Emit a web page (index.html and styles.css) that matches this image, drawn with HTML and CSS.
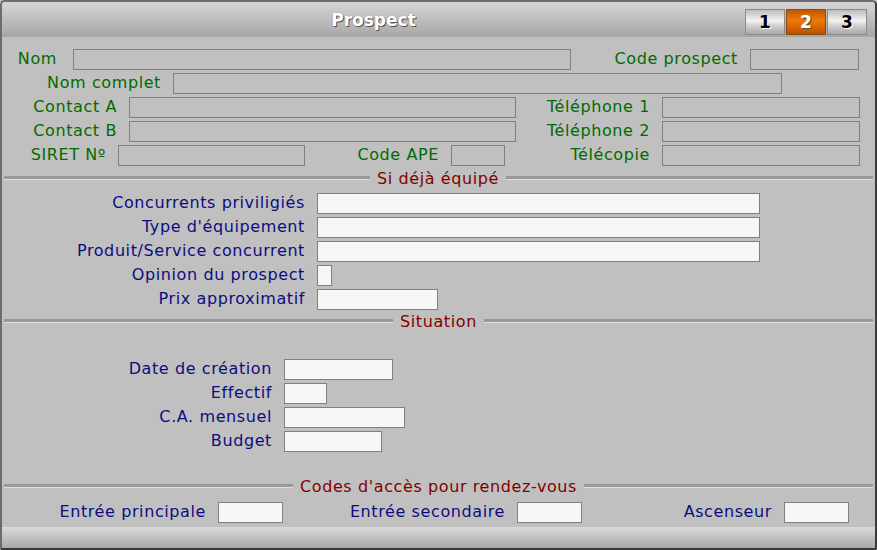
FILE: index.html
```html
<!DOCTYPE html>
<html lang="fr">
<head>
<meta charset="utf-8">
<title>Prospect</title>
<link rel="stylesheet" href="styles.css">
</head>
<body>
<div class="window">
  <div class="titlebar">
    <div class="title">Prospect</div>
    <div class="tabs">
      <div class="tab">1</div>
      <div class="tab active">2</div>
      <div class="tab">3</div>
    </div>
  </div>
  <div class="body">
    <div class="sec sec1">
      <div class="row r1">
        <span class="lbl g wide">Nom</span><span class="fld dis"></span>
        <span class="lbl g">Code prospect</span><span class="fld dis"></span>
      </div>
      <div class="row r2">
        <span class="lbl g">Nom complet</span><span class="fld dis"></span>
      </div>
      <div class="row r3">
        <span class="lbl g">Contact A</span><span class="fld dis"></span>
        <span class="lbl g">Téléphone 1</span><span class="fld dis"></span>
      </div>
      <div class="row r3">
        <span class="lbl g">Contact B</span><span class="fld dis"></span>
        <span class="lbl g">Téléphone 2</span><span class="fld dis"></span>
      </div>
      <div class="row r5">
        <span class="lbl g">SIRET Nº</span><span class="fld dis"></span>
        <span class="lbl g">Code APE</span><span class="fld dis"></span>
        <span class="lbl g">Télécopie</span><span class="fld dis"></span>
      </div>
    </div>
    <div class="divider d1"><span class="line"></span><span class="dtext">Si déjà équipé</span><span class="line"></span></div>
    <div class="sec sec2">
      <div class="row s2"><span class="lbl b">Concurrents priviligiés</span><span class="fld w443"></span></div>
      <div class="row s2"><span class="lbl b">Type d'équipement</span><span class="fld w443"></span></div>
      <div class="row s2"><span class="lbl b">Produit/Service concurrent</span><span class="fld w443"></span></div>
      <div class="row s2"><span class="lbl b">Opinion du prospect</span><span class="fld w15"></span></div>
      <div class="row s2"><span class="lbl b">Prix approximatif</span><span class="fld w121"></span></div>
    </div>
    <div class="divider d2"><span class="line"></span><span class="dtext">Situation</span><span class="line"></span></div>
    <div class="sec sec3">
      <div class="row s3"><span class="lbl b">Date de création</span><span class="fld w109"></span></div>
      <div class="row s3"><span class="lbl b">Effectif</span><span class="fld w43"></span></div>
      <div class="row s3"><span class="lbl b">C.A. mensuel</span><span class="fld w121"></span></div>
      <div class="row s3"><span class="lbl b">Budget</span><span class="fld w98"></span></div>
    </div>
    <div class="divider d3"><span class="line"></span><span class="dtext">Codes d'accès pour rendez-vous</span><span class="line"></span></div>
    <div class="sec sec4">
      <div class="row s4">
        <span class="lbl b">Entrée principale</span><span class="fld"></span>
        <span class="lbl b">Entrée secondaire</span><span class="fld"></span>
        <span class="lbl b">Ascenseur</span><span class="fld"></span>
      </div>
    </div>
  </div>
  <div class="footer"></div>
</div>
</body>
</html>
```
FILE: styles.css
```css
* { box-sizing: border-box; }
html, body { margin: 0; padding: 0; background: #c0c0c0; }
body { font-family: "DejaVu Sans", Verdana, sans-serif; font-size: 16px; }

.window {
  width: 877px;
  height: 550px;
  border: 2px solid #6c6c6c;
  border-right-color: #3a3a3a;
  border-bottom-color: #3a3a3a;
  border-radius: 5px 5px 2px 2px;
  background: #c0c0c0;
  display: flex;
  flex-direction: column;
  overflow: hidden;
}

.titlebar {
  height: 35px;
  flex: none;
  display: flex;
  align-items: flex-start;
  background: linear-gradient(#d6d6d6, #a6a6a6);
}
.title {
  flex: 1;
  text-align: center;
  padding-top: 8px;
  font-weight: bold;
  font-size: 17px;
  color: #ffffff;
  text-shadow: 1px 1px 0 #555, 0 0 1px #777;
}
.tabs {
  display: flex;
  gap: 1px;
  margin-top: 7px;
  margin-right: 8px;
}
.tab {
  width: 40px;
  height: 26px;
  border: 1px solid #8a8a8a;
  background: linear-gradient(#bcbcbc, #f4f4f4 45%, #d8d8d8 60%, #a8a8a8);
  text-align: center;
  line-height: 24px;
  font-weight: bold;
  font-size: 17px;
  color: #000;
  text-shadow: 1px 1px 0 #fff;
}
.tab.active {
  background: linear-gradient(#c05800, #ef7a0c 45%, #e26c00 60%, #b85200);
  border-color: #8a4a10;
  color: #fff;
  text-shadow: 1px 1px 0 #553;
}

.body { flex: 1; display: flex; flex-direction: column; }

.sec { display: flex; flex-direction: column; gap: 3px; }
.sec1 { margin-top: 12px; }
.sec2 { margin-top: 5px; }
.sec3 { margin-top: 28px; }
.sec4 { margin-top: 6px; }

.row { display: grid; height: 21px; align-items: stretch; }
.lbl {
  text-align: right;
  padding-right: 12px;
  white-space: nowrap;
  line-height: 20px;
  letter-spacing: 0.6px;
}
.lbl.wide { padding-right: 16px; }
.g { color: #006b00; }
.b { color: #0c0c80; }

.fld {
  border: 1px solid #808080;
  background: #f7f7f7;
  height: 21px;
}
.fld.dis { background: #c0c0c0; }

.r1 { grid-template-columns: 71px 498px 179px 109px; }
.r2 { grid-template-columns: 171px 609px; }
.r3 { grid-template-columns: 127px 387px 146px 198px; }
.r5 { grid-template-columns: 116px 187px 146px 54px 157px 198px; }
.s2 { grid-template-columns: 315px auto 1fr; }
.s3 { grid-template-columns: 282px auto 1fr; }
.s4 { grid-template-columns: 216px 65px 234px 65px 202px 65px; }

.w443 { width: 443px; }
.w15 { width: 15px; }
.w121 { width: 121px; }
.w109 { width: 109px; }
.w43 { width: 43px; }
.w98 { width: 98px; }

.divider {
  display: flex;
  align-items: center;
  height: 20px;
  padding: 0 2px;
}
.d1 { margin-top: 2px; }
.d2 { margin-top: 1px; }
.d3 { margin-top: 24px; }
.line {
  flex: 1;
  height: 4px;
  border-top: 3px solid #999;
  border-bottom: 1px solid #dedede;
}
.dtext {
  color: #800000;
  padding: 0 7px;
  letter-spacing: 0.6px;
}
.d1 .line:first-child { flex: none; width: 366px; }
.d2 .line:first-child { flex: none; width: 389px; }
.d3 .line:first-child { flex: none; width: 289px; }

.footer {
  height: 21px;
  flex: none;
  background: linear-gradient(#dadada, #a8a8a8);
}
```
